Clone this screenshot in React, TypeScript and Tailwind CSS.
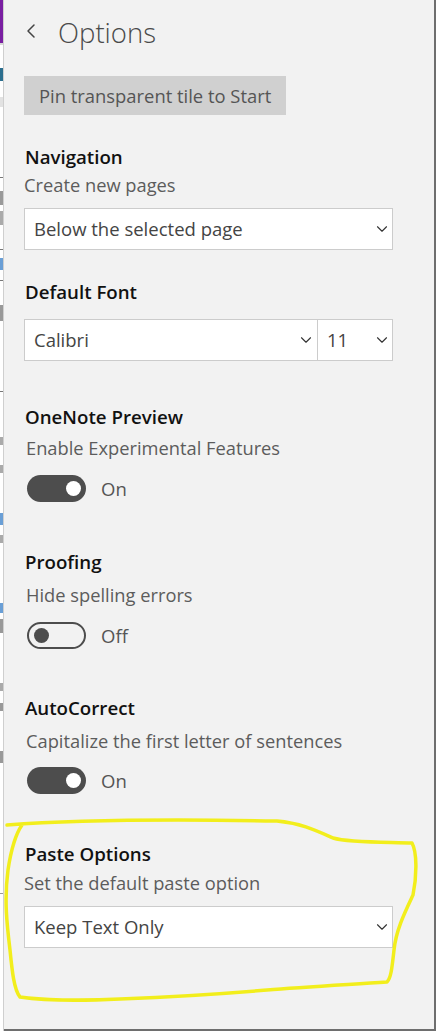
import { ChevronDown, ChevronLeft } from 'lucide-react';

// bits of the app behind the flyout that peek out on the left edge
const stripBits: { h: number; c: string }[] = [
  { h: 43, c: 'bg-[#7a1fa2]' },
  { h: 2, c: 'bg-[#d8d8d8]' },
  { h: 23, c: 'bg-white' },
  { h: 13, c: 'bg-[#2b6e8e]' },
  { h: 16, c: 'bg-white' },
  { h: 10, c: 'bg-[#e2e2e2]' },
  { h: 70, c: 'bg-white' },
  { h: 1, c: 'bg-[#777]' },
  { h: 13, c: 'bg-white' },
  { h: 14, c: 'bg-[#999]' },
  { h: 6, c: 'bg-white' },
  { h: 14, c: 'bg-[#aaa]' },
  { h: 24, c: 'bg-white' },
  { h: 1, c: 'bg-[#777]' },
  { h: 8, c: 'bg-white' },
  { h: 12, c: 'bg-[#6a9fd6]' },
  { h: 10, c: 'bg-white' },
  { h: 1, c: 'bg-[#777]' },
  { h: 24, c: 'bg-white' },
  { h: 16, c: 'bg-[#999]' },
  { h: 70, c: 'bg-white' },
  { h: 1, c: 'bg-[#777]' },
  { h: 45, c: 'bg-white' },
  { h: 8, c: 'bg-[#aaa]' },
  { h: 20, c: 'bg-white' },
  { h: 8, c: 'bg-[#aaa]' },
  { h: 40, c: 'bg-white' },
  { h: 12, c: 'bg-[#6a9fd6]' },
  { h: 10, c: 'bg-white' },
  { h: 8, c: 'bg-[#aaa]' },
  { h: 60, c: 'bg-white' },
  { h: 10, c: 'bg-[#6a9fd6]' },
  { h: 6, c: 'bg-white' },
  { h: 14, c: 'bg-[#999]' },
  { h: 50, c: 'bg-white' },
  { h: 8, c: 'bg-[#aaa]' },
  { h: 12, c: 'bg-white' },
  { h: 8, c: 'bg-[#999]' },
  { h: 40, c: 'bg-white' },
  { h: 12, c: 'bg-[#999]' },
  { h: 130, c: 'bg-white' },
  { h: 1, c: 'bg-[#999]' },
];

function Dropdown({ value, className }: { value: string; className?: string }) {
  return (
    <div
      className={`flex h-[42px] items-center justify-between border border-[#cccccc] bg-white pl-[9px] pr-[1px] text-[18.5px] text-[#444] ${className ?? ''}`}
    >
      <span>{value}</span>
      <ChevronDown size={18} strokeWidth={1.5} className="text-[#333]" />
    </div>
  );
}

function Toggle({ on, className }: { on: boolean; className?: string }) {
  return (
    <div className={`ml-[3px] flex items-center gap-[15px] ${className ?? ''}`}>
      {on ? (
        <div className="flex h-[27px] w-[59px] items-center justify-end rounded-full bg-[#4d4d4d] pr-[5px]">
          <div className="h-[15px] w-[15px] rounded-full bg-white" />
        </div>
      ) : (
        <div className="flex h-[27px] w-[59px] items-center rounded-full border-2 border-[#4d4d4d] pl-[5px]">
          <div className="h-[15px] w-[15px] rounded-full bg-[#4d4d4d]" />
        </div>
      )}
      <span className="text-[18.5px] leading-[24px] text-[#555]">{on ? 'On' : 'Off'}</span>
    </div>
  );
}

function Title({ children, className }: { children: string; className?: string }) {
  return (
    <div className={`ml-[1px] text-[18.7px] font-semibold leading-[24px] text-[#111] ${className ?? ''}`}>
      {children}
    </div>
  );
}

function Desc({ children, className }: { children: string; className?: string }) {
  return <div className={`text-[18.3px] leading-[24px] text-[#5c5c5c] ${className ?? ''}`}>{children}</div>;
}

export default function App() {
  return (
    <div className="relative flex h-[1031px] w-[436px] overflow-hidden font-['Open_Sans',sans-serif]">
      <div className="flex w-[3px] flex-col bg-white">
        {stripBits.map((b, i) => (
          <div key={i} className={`shrink-0 ${b.c}`} style={{ height: b.h }} />
        ))}
      </div>
      <div className="w-px bg-[#cfcfcf]" />

      <div className="flex flex-1 flex-col border-b-2 border-r-2 border-[#6e6e6e] bg-[#f2f2f2] pl-[20px] pr-[41px]">
        <div className="mt-[9px] flex h-[44px] items-center">
          <ChevronLeft size={24} strokeWidth={1.5} className="-ml-[5px] text-[#444]" />
          <span className="ml-[15px] mt-[4px] text-[27.5px] font-light leading-[38px] text-[#4a4a4a]">Options</span>
        </div>

        <button className="mt-[23px] flex h-[39px] w-[262px] items-center bg-[#d0d0d0] pl-[15px] text-[18.4px] text-[#555]">
          Pin transparent tile to Start
        </button>

        <Title className="mt-[30px]">Navigation</Title>
        <Desc className="mt-[4px]">Create new pages</Desc>
        <Dropdown value="Below the selected page" className="mt-[11px]" />

        <Title className="mt-[30px]">Default Font</Title>
        <div className="mt-[15px] flex">
          <Dropdown value="Calibri" className="w-[294px] pr-[2px]" />
          <Dropdown value="11" className="-ml-px flex-1" />
        </div>

        <Title className="mt-[44px]">OneNote Preview</Title>
        <Desc className="ml-[2px] mt-[7px]">Enable Experimental Features</Desc>
        <Toggle on className="mt-[15px]" />

        <Title className="mt-[48px]">Proofing</Title>
        <Desc className="ml-[2px] mt-[9px]">Hide spelling errors</Desc>
        <Toggle on={false} className="mt-[15px]" />

        <Title className="mt-[47px]">AutoCorrect</Title>
        <Desc className="ml-[2px] mt-[9px]">Capitalize the first letter of sentences</Desc>
        <Toggle on className="mt-[14px]" />

        <Title className="mt-[48px]">Paste Options</Title>
        <Desc className="mt-[5px]">Set the default paste option</Desc>
        <Dropdown value="Keep Text Only" className="mt-[11px]" />
      </div>

      {/* yellow hand-drawn highlight over the paste options */}
      <svg className="pointer-events-none absolute inset-0" width={436} height={1031} viewBox="0 0 436 1031">
        <path
          d="M7 825 C 60 821, 160 819, 277 821 C 300 823, 315 830, 333 838 C 350 843, 390 842, 412 843 C 417 852, 417 875, 413 895 C 405 912, 396 930, 394 950 C 392 968, 391 978, 387 982 C 340 985, 300 987, 267 990 C 220 994, 170 997, 120 999 C 80 1001, 40 1000, 20 997 C 14 990, 12 970, 10 950 C 7 925, 4 900, 8 870 C 11 850, 15 835, 22 825"
          fill="none"
          stroke="#f2ee1c"
          strokeWidth={3.5}
          strokeLinecap="round"
          strokeLinejoin="round"
        />
      </svg>
    </div>
  );
}
